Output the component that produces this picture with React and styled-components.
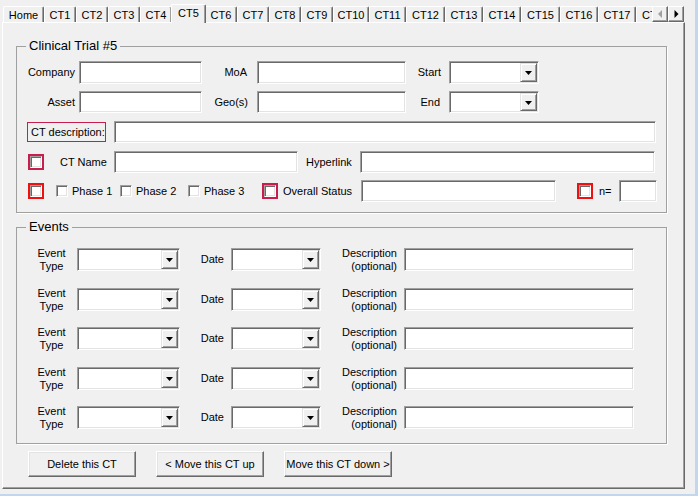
import React from "react";
import styled, { createGlobalStyle } from "styled-components";

const Global = createGlobalStyle`
  html, body {
    margin: 0;
    padding: 0;
    background: #f0f0f0;
  }
  body {
    font-family: "Liberation Sans", Arial, sans-serif;
    font-size: 11px;
    color: #000;
  }
`;

const Window = styled.div`
  width: 698px;
  height: 496px;
  box-sizing: border-box;
  padding-left: 2px;
  background: #f0f0f0;
  border-right: 3px solid #c2d6ed;
  border-bottom: 2px solid #c2d6ed;
  overflow: hidden;
`;

const TabStrip = styled.div`
  display: flex;
  align-items: flex-end;
  width: 683px;
  height: 23px;
  margin-bottom: -1px;
`;

const Tabs = styled.div`
  display: flex;
  align-items: flex-end;
  width: 650px;
  height: 23px;
  padding-left: 1px;
  box-sizing: border-box;
  overflow: hidden;
`;

const Tab = styled.div`
  flex: none;
  position: relative;
  z-index: ${(p) => (p.$active ? 2 : 1)};
  width: ${(p) => p.$w}px;
  height: ${(p) => (p.$active ? 19 : 16)}px;
  margin: ${(p) => (p.$active ? "0 -1px 0 -1px" : "0 0 1px 0")};
  box-sizing: border-box;
  display: flex;
  align-items: center;
  justify-content: ${(p) => (p.$clip ? "flex-start" : "center")};
  padding-left: ${(p) => (p.$clip ? 5 : 0)}px;
  padding-bottom: ${(p) => (p.$active ? 3 : 0)}px;
  background: #f0f0f0;
  border-top: 1px solid #fff;
  border-left: 1px solid #fff;
  border-right: 1px solid #696969;
  box-shadow: inset -1px 0 #a0a0a0;
  border-radius: 2px 2px 0 0;
  white-space: nowrap;
  overflow: hidden;
`;

const ScrollArrows = styled.div`
  display: flex;
  margin-bottom: 1px;
`;

const ScrollBtn = styled.div`
  width: 16px;
  height: 16px;
  box-sizing: border-box;
  display: flex;
  align-items: center;
  justify-content: center;
  background: #f0f0f0;
  border: 1px solid;
  border-color: #fff #696969 #696969 #fff;
  box-shadow: inset -1px -1px #a0a0a0;
`;

const Panel = styled.div`
  width: 683px;
  height: 467px;
  box-sizing: border-box;
  padding: 15px 0 0 13px;
  border-top: 1px solid #fff;
  border-left: 1px solid #fff;
  border-right: 1px solid #696969;
  border-bottom: 1px solid #696969;
  box-shadow: inset -1px -1px #a0a0a0;
`;

const Frame = styled.fieldset`
  margin: ${(p) => p.$mt || 0}px 0 0 0;
  padding: ${(p) => p.$pad};
  width: 651px;
  min-width: 0;
  box-sizing: border-box;
  border: 1px solid #a0a0a0;
  box-shadow: 1px 1px 0 #fff;
`;

const Legend = styled.legend`
  margin-left: 9px;
  padding: 0 3px;
  font-size: 13px;
  line-height: 16px;
`;

const Row = styled.div`
  display: flex;
  align-items: center;
  height: ${(p) => p.$h || 22}px;
  margin-top: ${(p) => p.$mt || 0}px;
  margin-left: ${(p) => p.$ml || 0}px;
`;

const Label = styled.div`
  flex: none;
  width: ${(p) => p.$w}px;
  box-sizing: border-box;
  margin-left: ${(p) => p.$ml || 0}px;
  padding-left: ${(p) => p.$pl || 0}px;
  padding-right: ${(p) => p.$pr || 0}px;
  text-align: ${(p) => p.$align || "left"};
  line-height: 13px;
  white-space: nowrap;
`;

const BoxedLabel = styled.div`
  flex: none;
  width: 79px;
  height: 20px;
  box-sizing: border-box;
  margin-left: 10px;
  padding-left: 3px;
  display: flex;
  align-items: center;
  border: 1px solid #c81e4e;
  white-space: nowrap;
  overflow: hidden;
`;

const Field = styled.div`
  flex: none;
  width: ${(p) => p.$w}px;
  height: ${(p) => p.$h || 22}px;
  box-sizing: border-box;
  margin-left: ${(p) => p.$ml || 0}px;
  background: #fff;
  border: 1px solid;
  border-color: #a0a0a0 #fff #fff #a0a0a0;
  box-shadow: inset 1px 1px #696969, inset -1px -1px #e3e3e3;
`;

const Combo = styled(Field)`
  display: flex;
  justify-content: flex-end;
  padding: 1px;
`;

const DropBtn = styled.div`
  width: 17px;
  height: 100%;
  box-sizing: border-box;
  display: flex;
  align-items: center;
  justify-content: center;
  padding-top: 1px;
  background: #f0f0f0;
  border: 1px solid;
  border-color: #e3e3e3 #696969 #696969 #e3e3e3;
  box-shadow: inset 1px 1px #fff, inset -1px -1px #a0a0a0;
`;

const Check = styled.span`
  flex: none;
  display: inline-block;
  width: 12px;
  height: 12px;
  box-sizing: border-box;
  background: #fff;
  border: 1px solid;
  border-color: #a0a0a0 #fff #fff #a0a0a0;
  box-shadow: inset 1px 1px #696969, inset -1px -1px #e3e3e3;
`;

const RedWrap = styled.span`
  flex: none;
  display: flex;
  width: 16px;
  height: 16px;
  box-sizing: border-box;
  margin-left: ${(p) => p.$ml || 0}px;
  border: 2px solid ${(p) => p.$color};
`;

const CheckItem = styled.label`
  flex: none;
  display: flex;
  align-items: center;
  gap: 4px;
  width: ${(p) => p.$w}px;
  margin-left: ${(p) => p.$ml || 0}px;
  white-space: nowrap;
`;

const ButtonRow = styled.div`
  display: flex;
  gap: 20px;
  margin: 7px 0 0 12px;
`;

const Button = styled.div`
  width: 108px;
  height: 26px;
  box-sizing: border-box;
  display: flex;
  align-items: center;
  justify-content: center;
  background: #f0f0f0;
  border: 1px solid;
  border-color: #fff #696969 #696969 #fff;
  box-shadow: inset -1px -1px #a0a0a0, inset 1px 1px #e3e3e3;
  white-space: nowrap;
`;

const tabs = [
  ["Home", 41],
  ["CT1", 32],
  ["CT2", 32],
  ["CT3", 32],
  ["CT4", 32],
  ["CT5", 35],
  ["CT6", 32],
  ["CT7", 32],
  ["CT8", 32],
  ["CT9", 32],
  ["CT10", 36],
  ["CT11", 37],
  ["CT12", 39],
  ["CT13", 38],
  ["CT14", 38],
  ["CT15", 39],
  ["CT16", 38],
  ["CT17", 38],
];

const DownArrow = () => (
  <svg width="7" height="4" viewBox="0 0 7 4">
    <polygon points="0,0 7,0 3.5,4" fill="#000" />
  </svg>
);

const DropDown = ({ w, h }) => (
  <Combo $w={w} $h={h}>
    <DropBtn>
      <DownArrow />
    </DropBtn>
  </Combo>
);

const EventRow = ({ mt }) => (
  <Row $h={23} $mt={mt}>
    <Label $w={43} $ml={13} $align="center">
      Event
      <br />
      Type
    </Label>
    <Combo $w={103} $h={23} $ml={4}>
      <DropBtn>
        <DownArrow />
      </DropBtn>
    </Combo>
    <Label $w={51} $align="right" $pr={7}>
      Date
    </Label>
    <DropDown w={90} h={23} />
    <Label $w={83} $align="right" $pr={7}>
      Description
      <br />
      (optional)
    </Label>
    <Field $w={230} $h={23} />
  </Row>
);

export default function App() {
  return (
    <Window>
      <Global />
      <TabStrip>
        <Tabs>
          {tabs.map(([name, w]) => (
            <Tab key={name} $w={w} $active={name === "CT5"}>
              {name}
            </Tab>
          ))}
          <Tab $w={38} $clip>
            CT18
          </Tab>
        </Tabs>
        <ScrollArrows>
          <ScrollBtn>
            <svg width="5" height="8" viewBox="0 0 5 8">
              <polygon points="4,0 4,8 0,4" fill="#a0a0a0" />
            </svg>
          </ScrollBtn>
          <ScrollBtn>
            <svg width="5" height="8" viewBox="0 0 5 8">
              <polygon points="0.5,0 0.5,8 4.5,4" fill="#000" />
            </svg>
          </ScrollBtn>
        </ScrollArrows>
      </TabStrip>

      <Panel>
        <Frame $pad="7px 0 10px 0">
          <Legend>Clinical Trial #5</Legend>
          <Row $h={23}>
            <Label $w={62} $align="right" $pr={4}>
              Company
            </Label>
            <Field $w={123} $h={23} />
            <Label $w={55} $align="right" $pr={10}>
              MoA
            </Label>
            <Field $w={149} $h={23} />
            <Label $w={43} $align="right" $pr={8}>
              Start
            </Label>
            <DropDown w={90} h={23} />
          </Row>
          <Row $mt={7}>
            <Label $w={62} $align="right" $pr={4}>
              Asset
            </Label>
            <Field $w={123} />
            <Label $w={55} $align="right" $pr={9}>
              Geo(s)
            </Label>
            <Field $w={149} />
            <Label $w={43} $align="right" $pr={9}>
              End
            </Label>
            <DropDown w={90} />
          </Row>
          <Row $mt={8}>
            <BoxedLabel>CT description:</BoxedLabel>
            <Field $w={542} $ml={8} />
          </Row>
          <Row $mt={8}>
            <RedWrap $color="#c81e4e" $ml={11}>
              <Check />
            </RedWrap>
            <Label $w={70} $pl={16}>
              CT Name
            </Label>
            <Field $w={184} />
            <Label $w={62} $pl={8}>
              Hyperlink
            </Label>
            <Field $w={295} />
          </Row>
          <Row $mt={7}>
            <RedWrap $color="#ee1111" $ml={11}>
              <Check />
            </RedWrap>
            <CheckItem $w={64} $ml={12}>
              <Check />
              Phase 1
            </CheckItem>
            <CheckItem $w={68}>
              <Check />
              Phase 2
            </CheckItem>
            <CheckItem $w={74}>
              <Check />
              Phase 3
            </CheckItem>
            <RedWrap $color="#c81e4e">
              <Check />
            </RedWrap>
            <Label $w={78} $ml={5}>
              Overall Status
            </Label>
            <Field $w={195} />
            <RedWrap $color="#ee1111" $ml={21}>
              <Check />
            </RedWrap>
            <Label $w={20} $ml={6}>
              n=
            </Label>
            <Field $w={38} />
          </Row>
        </Frame>

        <Frame $mt={6} $pad="13px 0 14px 0">
          <Legend>Events</Legend>
          {[0, 17, 16, 17, 16].map((mt, i) => (
            <EventRow key={i} mt={mt} />
          ))}
        </Frame>

        <ButtonRow>
          <Button>Delete this CT</Button>
          <Button>&lt; Move this CT up</Button>
          <Button>Move this CT down &gt;</Button>
        </ButtonRow>
      </Panel>
    </Window>
  );
}
